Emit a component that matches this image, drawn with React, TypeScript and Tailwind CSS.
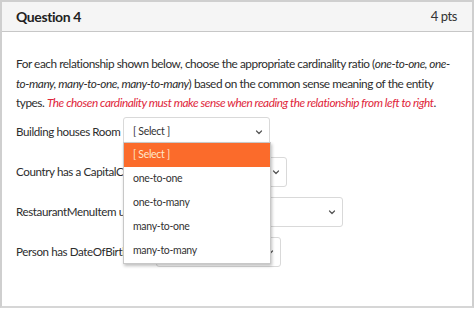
import React from 'react';

const Chevron = () => (
  <svg width="10" height="10" viewBox="0 0 10 10" fill="none" stroke="#555" strokeWidth="1.2" strokeLinecap="round" strokeLinejoin="round">
    <path d="M2.5 4 5 6.5 7.5 4" />
  </svg>
);

const Select = ({ width, value = '' }: { width: string; value?: string }) => (
  <div className={`${width} h-[30px] shrink-0 border border-[#d9d9d9] rounded-[3px] bg-white flex items-center justify-between pl-[9px] pr-[5px] text-[10.5px] tracking-[-0.3px] text-[#333]`}>
    <span>{value}</span>
    <Chevron />
  </div>
);

const options = ['one-to-one', 'one-to-many', 'many-to-one', 'many-to-many'];

export default function App() {
  return (
    <div className="w-[474px] h-[310px] bg-white overflow-hidden" style={{ fontFamily: 'Lato, "Open Sans", sans-serif' }}>
      <div className="h-[308px] border-[2px] border-[#cfcfcf] border-b-[#d6d6d6] flex flex-col">
        {/* Header */}
        <div className="h-[30px] shrink-0 bg-[#f5f5f5] border-b border-[#c7c7c7] flex items-center justify-between px-[14px]">
          <span className="text-[14px] tracking-[-0.4px] font-bold text-[#222]">Question 4</span>
          <span className="text-[13px] tracking-[-0.4px] text-[#333] pr-[1px]">4 pts</span>
        </div>

        {/* Body */}
        <div className="px-[14px] pt-[22px] text-[#2d3b45]">
          <p className="text-[11.8px] tracking-[-0.45px] leading-[19.5px] text-[#2d2d2d]">
            For each relationship shown below, choose the appropriate cardinality ratio (<i>one-to-one, one-to-many, many-to-one, many-to-many</i>) based on the common sense meaning of the entity types.{' '}
            <i className="text-[#e0263b]">The chosen cardinality must make sense when reading the relationship from left to right</i>.
          </p>

          <div className="relative mt-[4px] flex flex-col gap-[10px] text-[11.6px] tracking-[-0.4px] text-[#2d2d2d]">
            <div className="flex items-center">
              <span className="w-[107px] shrink-0 whitespace-nowrap overflow-hidden">Building houses Room</span>
              <Select width="w-[147px]" value="[ Select ]" />
            </div>
            <div className="flex items-center">
              <span className="w-[155px] shrink-0 whitespace-nowrap overflow-hidden">Country has a CapitalCity</span>
              <Select width="w-[116px]" />
            </div>
            <div className="flex items-center">
              <span className="w-[200px] shrink-0 whitespace-nowrap overflow-hidden">RestaurantMenuItem uses Ingredient</span>
              <Select width="w-[127px]" />
            </div>
            <div className="flex items-center">
              <span className="w-[140px] shrink-0 whitespace-nowrap overflow-hidden">Person has DateOfBirth</span>
              <Select width="w-[125px]" />
            </div>

            {/* Open dropdown */}
            <div className="absolute left-[107px] top-[25px] w-[148px] bg-white border border-[#c8c8c8] shadow-[1px_2px_3px_rgba(0,0,0,0.25)] text-[10.5px] tracking-[-0.3px]">
              <div className="h-[24px] bg-[#fb6b2b] text-[#ffe7c9] flex items-center pl-[9px]">[ Select ]</div>
              {options.map((o) => (
                <div key={o} className="h-[24px] flex items-center pl-[9px] text-[#333]">{o}</div>
              ))}
            </div>
          </div>
        </div>
      </div>
    </div>
  );
}
